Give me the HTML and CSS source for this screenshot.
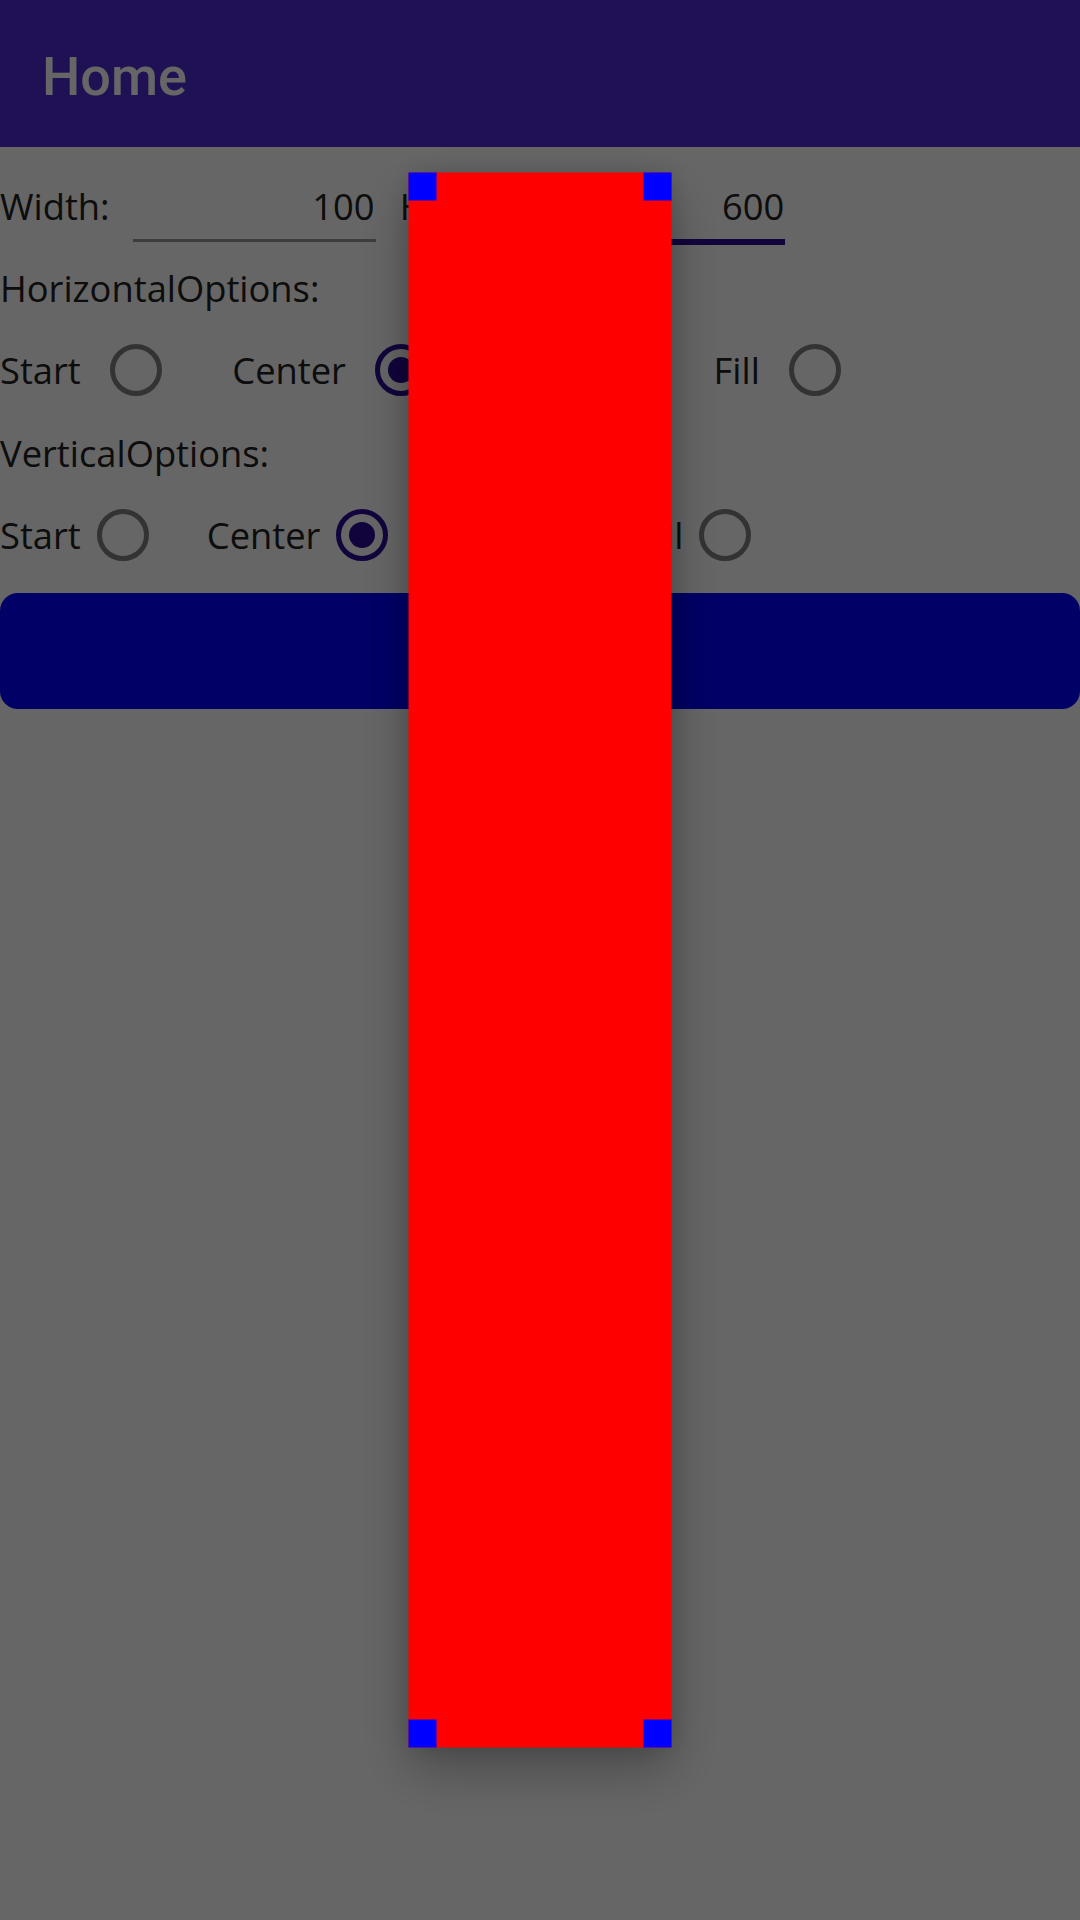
FILE: index.html
```html
<!DOCTYPE html>
<html lang="en">
<head>
<meta charset="utf-8">
<title>Home</title>
<link rel="stylesheet" href="styles.css">
</head>
<body>
<div class="page">
  <header class="appbar">
    <h1 class="appbar-title">Home</h1>
  </header>
  <main class="content">
    <div class="size-row">
      <span class="text">Width:</span>
      <div class="entry entry-width"><span class="entry-value">100</span></div>
      <span class="text">Height:</span>
      <div class="entry entry-height is-focused"><span class="entry-value">600</span></div>
    </div>

    <div class="text section-label section-h">HorizontalOptions:</div>
    <div class="options options-h">
      <div class="option"><span class="text">Start</span><span class="radio"></span></div>
      <div class="option"><span class="text">Center</span><span class="radio is-checked"></span></div>
      <div class="option"><span class="text">End</span><span class="radio"></span></div>
      <div class="option"><span class="text">Fill</span><span class="radio"></span></div>
    </div>

    <div class="text section-label section-v">VerticalOptions:</div>
    <div class="options options-v">
      <div class="option"><span class="text">Start</span><span class="radio"></span></div>
      <div class="option"><span class="text">Center</span><span class="radio is-checked"></span></div>
      <div class="option"><span class="text">End</span><span class="radio"></span></div>
      <div class="option"><span class="text">Fill</span><span class="radio"></span></div>
    </div>

    <button class="action-button" type="button"></button>
  </main>

  <div class="scrim"></div>

  <div class="popup">
    <div class="popup-row">
      <span class="corner"></span>
      <span class="corner"></span>
    </div>
    <div class="popup-row">
      <span class="corner"></span>
      <span class="corner"></span>
    </div>
  </div>
</div>
</body>
</html>
```

FILE: styles.css
```css
* {
  box-sizing: border-box;
}

html, body {
  margin: 0;
  padding: 0;
}

body {
  width: 1080px;
  height: 1920px;
  overflow: hidden;
  background: #ffffff;
  font-family: "Open Sans", "Noto Sans", sans-serif;
}

.page {
  width: 1080px;
  height: 1920px;
  background: #ffffff;
}

/* App bar */
.appbar {
  height: 147px;
  background: #512bd4;
  padding: 45px 0 0 42px;
}

.appbar-title {
  margin: 0;
  font-family: Roboto, "Noto Sans", sans-serif;
  font-weight: 500;
  font-size: 54px;
  line-height: normal;
  color: #ffffff;
}

/* Content */
.content {
  display: flex;
  flex-direction: column;
}

.text {
  font-size: 36.3px;
  line-height: 50px;
  color: #212121;
  white-space: nowrap;
}

.size-row {
  display: flex;
  align-items: flex-start;
  height: 97px;
  padding-top: 34px;
}

.entry {
  width: 243px;
  margin-left: 23px;
  margin-right: 24px;
  padding: 0 1px 8px 0;
  border-bottom: 3px solid #9a9a9a;
  text-align: right;
  font-size: 36.3px;
  line-height: 50px;
  color: #212121;
}

.entry-height {
  width: 242px;
}

.entry.is-focused {
  border-bottom: 6px solid #2b0b98;
}

.section-h {
  margin-top: 19px;
}

.section-v {
  margin-top: 32px;
}

.options {
  display: flex;
  align-items: center;
  height: 52px;
  margin-top: 31px;
}

.option {
  display: flex;
  align-items: center;
}

.radio {
  width: 52px;
  height: 52px;
  border-radius: 50%;
  border: 5px solid #808080;
  display: flex;
  align-items: center;
  justify-content: center;
  flex: none;
}

.radio.is-checked {
  border-color: #2b0b98;
}

.radio.is-checked::after {
  content: "";
  width: 26px;
  height: 26px;
  border-radius: 50%;
  background: #2b0b98;
}

.options-h {
  gap: 70px;
}

.options-h .radio {
  margin-left: 29.5px;
}

.options-v {
  gap: 58px;
}

.options-v .radio {
  margin-left: 16px;
}

.action-button {
  margin-top: 32px;
  height: 116px;
  width: 1080px;
  border: none;
  border-radius: 18px;
  background: #0000ff;
  padding: 0;
}

/* Dim layer */
.scrim {
  position: fixed;
  inset: 0;
  background: rgba(0, 0, 0, 0.6);
}

/* Popup */
.popup {
  position: fixed;
  left: 50%;
  top: 50%;
  width: 263px;
  height: 1575px;
  transform: translate(-50%, -50%);
  background: #ff0000;
  display: flex;
  flex-direction: column;
  justify-content: space-between;
  box-shadow: 0 22px 50px rgba(0, 0, 0, 0.28), 0 0 24px rgba(0, 0, 0, 0.14);
}

.popup-row {
  display: flex;
  justify-content: space-between;
}

.corner {
  width: 28px;
  height: 28px;
  background: #0000ff;
}
```
